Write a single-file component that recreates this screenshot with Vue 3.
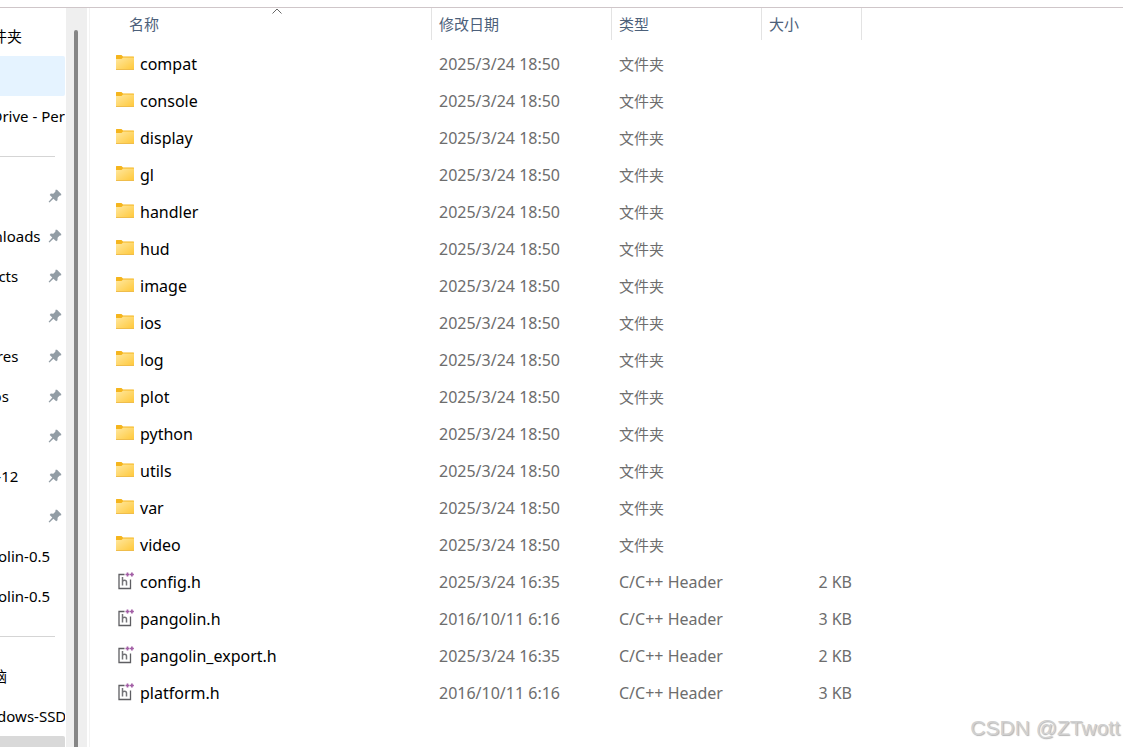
<script setup>
const places = [
  { label: '主文件夹' },
  { label: '', state: 'active' },
  { label: 'OneDrive - Personal' },
  { divider: true },
  { label: '', pinned: true },
  { label: 'Downloads', pinned: true },
  { label: 'Projects', pinned: true },
  { label: '', pinned: true },
  { label: 'Pictures', pinned: true },
  { label: 'Videos', pinned: true },
  { label: '', pinned: true },
  { label: '2024-12', pinned: true },
  { label: '', pinned: true },
  { label: 'Pangolin-0.5' },
  { label: 'Pangolin-0.5' },
  { divider: true },
  { label: '此电脑' },
  { label: 'Windows-SSD', nested: true },
  { label: '', state: 'current' },
]

const folders = [
  'compat', 'console', 'display', 'gl', 'handler', 'hud', 'image',
  'ios', 'log', 'plot', 'python', 'utils', 'var', 'video',
]

const entries = [
  ...folders.map((name) => ({ name, date: '2025/3/24 18:50', type: '文件夹', size: '', folder: true })),
  { name: 'config.h', date: '2025/3/24 16:35', type: 'C/C++ Header', size: '2 KB' },
  { name: 'pangolin.h', date: '2016/10/11 6:16', type: 'C/C++ Header', size: '3 KB' },
  { name: 'pangolin_export.h', date: '2025/3/24 16:35', type: 'C/C++ Header', size: '2 KB' },
  { name: 'platform.h', date: '2016/10/11 6:16', type: 'C/C++ Header', size: '3 KB' },
]
</script>

<template>
  <div class="explorer">
    <nav class="sidebar">
      <ul class="places">
        <li v-for="(p, i) in places" :key="i" class="place" :class="p.state">
          <hr v-if="p.divider" class="rule" />
          <template v-else>
            <span class="label" :class="{ nested: p.nested }">{{ p.label }}</span>
            <svg v-if="p.pinned" class="pin" viewBox="0 0 14 14" aria-hidden="true">
              <path d="M7.600 .8 L9 .8 L13.200 5 L13.200 6.300 L11.400 6.700 L9.600 8.800 L9.500 11.200 L8.200 12.300 L5.400 9.700 L1.500 13.400 L.6 12.700 L4.300 8.500 L1.700 5.900 L2.800 4.600 L5.300 4.700 L7.300 2.800 Z" />
            </svg>
          </template>
        </li>
      </ul>
    </nav>

    <div class="scroll"><div class="thumb"></div></div>

    <main class="content">
      <table class="files">
        <colgroup>
          <col class="c-name" /><col class="c-date" /><col class="c-type" /><col class="c-size" /><col />
        </colgroup>
        <thead>
          <tr>
            <th>
              <div class="head first">
                <svg class="sort" viewBox="0 0 10 6" aria-hidden="true"><path d="M.5 5.500 L5 1 L9.500 5.500" /></svg>
                名称
              </div>
            </th>
            <th><div class="head">修改日期</div></th>
            <th><div class="head">类型</div></th>
            <th><div class="head">大小</div></th>
            <td></td>
          </tr>
        </thead>
        <tbody>
          <tr v-for="e in entries" :key="e.name">
            <td>
              <div class="name">
                <svg v-if="e.folder" class="icon" viewBox="0 0 20 20" aria-hidden="true">
                  <defs>
                    <linearGradient id="folder-front" x1="0" y1="0" x2="1" y2="1">
                      <stop offset="0" stop-color="#ffe8a0" />
                      <stop offset="1" stop-color="#ffc83a" />
                    </linearGradient>
                  </defs>
                  <path d="M1 1.500 Q1 1 1.500 1 H6.500 L8 2.500 H18.500 Q19 2.500 19 3 V8 H1 Z" fill="#f5b51d" />
                  <path d="M1 5 H6.500 L8 3.500 H19 V15 Q19 15.500 18.500 15.500 H1.500 Q1 15.500 1 15 Z" fill="url(#folder-front)" />
                  <path d="M1 15.500 H19" stroke="#efbd4c" stroke-width="1" />
                </svg>
                <svg v-else class="icon" viewBox="0 0 20 20" aria-hidden="true">
                  <path d="M9.500 2.500 H4 V16.500 H15.500 V7.500" fill="none" stroke="#5e5e62" stroke-width="1.300" />
                  <path d="M7.500 5 V13.500 M7.500 9.500 Q8 8.200 9.500 8.200 Q11.500 8.200 11.500 10 V13.500" fill="none" stroke="#747478" stroke-width="1.500" />
                  <path d="M12.500 .5 V4.500 M10.500 2.500 H14.500 M16.900 .5 V4.500 M14.900 2.500 H18.900" stroke="#a35fa6" stroke-width="1.700" />
                </svg>
                {{ e.name }}
              </div>
            </td>
            <td class="meta">{{ e.date }}</td>
            <td class="meta" :class="{ cjk: e.folder }">{{ e.type }}</td>
            <td class="meta size">{{ e.size }}</td>
            <td></td>
          </tr>
        </tbody>
      </table>
    </main>

    <div class="watermark">CSDN @ZTwott</div>
  </div>
</template>

<style>
body {
  background: #fff;
}
</style>

<style scoped>
.explorer {
  position: relative;
  box-sizing: border-box;
  display: flex;
  height: 100vh;
  margin: 0;
  border-top: 7px solid #fff;
  overflow: hidden;
  color: #000;
  font-family: "Noto Sans", "Noto Sans CJK SC", sans-serif;
  font-size: 15px;
  line-height: 20px;
  box-shadow: inset 0 1px #cfc6c9;
}
.sidebar {
  flex: none;
  width: 66px;
  padding-top: 9px;
  overflow: hidden;
}
.places {
  margin: 0;
  padding: 0;
  list-style: none;
}
.place {
  display: flex;
  align-items: center;
  box-sizing: border-box;
  height: 40px;
  margin-right: 1px;
  padding-right: 3px;
  overflow: hidden;
}
.place:has(.label:last-child) {
  padding-right: 0;
}
.active {
  background: #e5f3ff;
  border-radius: 0 2px 2px 0;
}
.current {
  background: #d9d9d9;
  border-radius: 0 2px 2px 0;
}
.rule {
  width: 55px;
  margin: 0;
  border: 0;
  border-top: 1px solid #d5d5d5;
}
.label {
  flex: 1;
  margin-left: -38px;
  white-space: nowrap;
}
.nested {
  margin-left: -30px;
}
.pin {
  flex: none;
  width: 14px;
  height: 14px;
  fill: #929da5;
}
.scroll {
  flex: none;
  box-sizing: border-box;
  width: 21px;
  margin-top: 1px;
  padding: 22px 9px 0 8px;
  background: #efefef;
}
.thumb {
  height: 100%;
  background: #868686;
  border-radius: 2px 2px 0 0;
}
.content {
  flex: 1;
  min-width: 0;
  margin: 1px 0 0 2px;
  border-left: 1px solid #f3f3f3;
}
.files {
  width: 100%;
  table-layout: fixed;
  border-collapse: collapse;
}
.c-name { width: 342px; }
.c-date { width: 180px; }
.c-type { width: 150px; }
.c-size { width: 100px; }
th,
td {
  padding: 0;
  font-weight: 400;
  text-align: left;
}
th {
  padding-bottom: 5px;
}
.head {
  position: relative;
  box-sizing: border-box;
  height: 32px;
  padding-left: 7px;
  border-right: 1px solid #e3e3e3;
  color: #4c607a;
  line-height: 32px;
}
.first {
  margin-left: 32px;
}
.sort {
  position: absolute;
  top: 0;
  left: 50%;
  width: 10px;
  height: 6px;
  margin-left: -5px;
  fill: none;
  stroke: #666;
}
tbody td {
  height: 37px;
}
.name {
  display: flex;
  align-items: center;
  gap: 5px;
  padding-left: 25px;
  font-size: 16px;
}
.icon {
  flex: none;
  width: 20px;
  height: 20px;
}
.meta {
  padding-left: 7px;
  color: #6d6d6d;
  font-size: 16px;
}
.cjk {
  font-size: 15px;
}
.size {
  padding-right: 10px;
  text-align: right;
}
.watermark {
  position: absolute;
  right: 3px;
  bottom: 5px;
  color: #d0d0d0;
  font-family: "Liberation Sans", sans-serif;
  font-size: 21px;
  line-height: 28px;
  text-shadow: 1px 1px 1px #b4b4b4;
}
</style>
